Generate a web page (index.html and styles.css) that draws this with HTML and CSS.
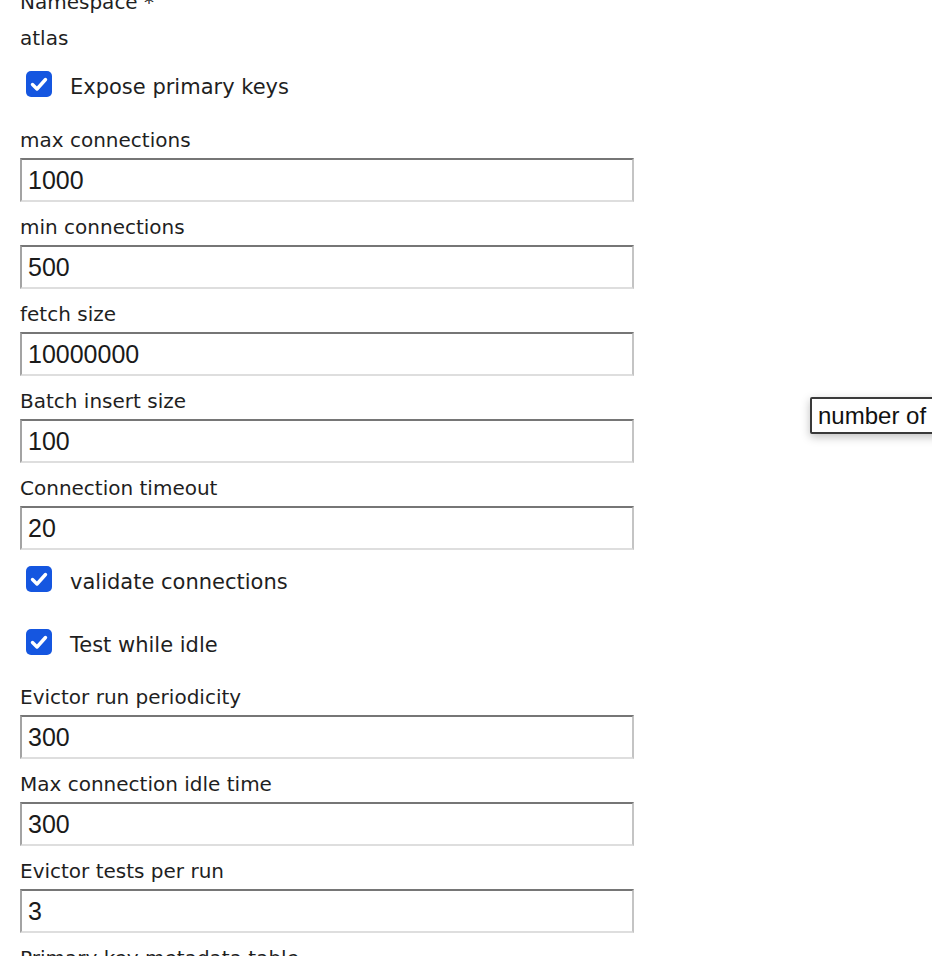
FILE: index.html
```html
<!DOCTYPE html>
<html lang="en">
<head>
<meta charset="utf-8">
<title>Connection settings</title>
<link rel="stylesheet" href="styles.css">
</head>
<body>
<form class="form">
  <div class="label first">Namespace *</div>
  <div class="value">atlas</div>

  <label class="check c1"><span class="box"><svg viewBox="0 0 26 26" width="26" height="26"><path d="M6.5 13.5 L11 18 L19.5 8.5" fill="none" stroke="#fff" stroke-width="3.4" stroke-linecap="round" stroke-linejoin="round"/></svg></span><span class="ctext">Expose primary keys</span></label>

  <div class="field"><div class="label">max connections</div><input class="input" type="text" value="1000"></div>
  <div class="field"><div class="label">min connections</div><input class="input" type="text" value="500"></div>
  <div class="field"><div class="label">fetch size</div><input class="input" type="text" value="10000000"></div>
  <div class="field"><div class="label">Batch insert size</div><input class="input" type="text" value="100"></div>
  <div class="field"><div class="label">Connection timeout</div><input class="input" type="text" value="20"></div>

  <label class="check c2"><span class="box"><svg viewBox="0 0 26 26" width="26" height="26"><path d="M6.5 13.5 L11 18 L19.5 8.5" fill="none" stroke="#fff" stroke-width="3.4" stroke-linecap="round" stroke-linejoin="round"/></svg></span><span class="ctext">validate connections</span></label>
  <label class="check c3"><span class="box"><svg viewBox="0 0 26 26" width="26" height="26"><path d="M6.5 13.5 L11 18 L19.5 8.5" fill="none" stroke="#fff" stroke-width="3.4" stroke-linecap="round" stroke-linejoin="round"/></svg></span><span class="ctext">Test while idle</span></label>

  <div class="field"><div class="label">Evictor run periodicity</div><input class="input" type="text" value="300"></div>
  <div class="field"><div class="label">Max connection idle time</div><input class="input" type="text" value="300"></div>
  <div class="field"><div class="label">Evictor tests per run</div><input class="input" type="text" value="3"></div>
  <div class="field"><div class="label">Primary key metadata table</div></div>
</form>
<div class="tooltip">number of records to insert per batch</div>
</body>
</html>
```
FILE: styles.css
```css
html, body {
  margin: 0;
  padding: 0;
  background: #fff;
  overflow: hidden;
  height: 956px;
}
body {
  position: relative;
  font-family: "DejaVu Sans", Verdana, sans-serif;
  color: #1f1f1f;
}
.form {
  padding: 0 20px;
}
.label {
  font-size: 20px;
  line-height: 24px;
  height: 24px;
  white-space: nowrap;
}
.label.first {
  margin-top: -10px;
}
.value {
  font-size: 20px;
  line-height: 24px;
  margin-top: 12px;
}
.field {
  margin-bottom: 13px;
}
.field .label {
  margin-bottom: 6px;
}
.input {
  display: block;
  box-sizing: border-box;
  width: 614px;
  height: 44px;
  margin: 0;
  padding: 0 6px;
  font-family: "Liberation Sans", Arial, sans-serif;
  font-size: 25px;
  color: #1a1a1a;
  background: #fff;
  border-style: solid;
  border-width: 2px;
  border-color: #767676 #c4c4c4 #dedede #a3a3a3;
  outline: none;
}
.check {
  display: flex;
  align-items: center;
  gap: 18px;
  height: 32px;
  padding-left: 6px;
}
.check.c1 { margin-top: 18px; margin-bottom: 28px; }
.check.c2 { margin-top: 0; margin-bottom: 31px; }
.check.c3 { margin-bottom: 27px; }
.box {
  display: block;
  width: 26px;
  height: 26px;
  border-radius: 5px;
  background: #1556e0;
}
.box svg { display: block; }
.ctext {
  font-size: 21px;
  line-height: 24px;
  padding-top: 6px;
  white-space: nowrap;
}
.tooltip {
  position: absolute;
  left: 810px;
  top: 397px;
  box-sizing: border-box;
  height: 37px;
  padding: 0 6px;
  border: 2px solid #3a3a3a;
  border-radius: 2px;
  background: #fff;
  font-family: "Liberation Sans", Arial, sans-serif;
  font-size: 24px;
  line-height: 34px;
  color: #111;
  white-space: nowrap;
  box-shadow: 0 3px 10px rgba(0, 0, 0, 0.25);
}
```
